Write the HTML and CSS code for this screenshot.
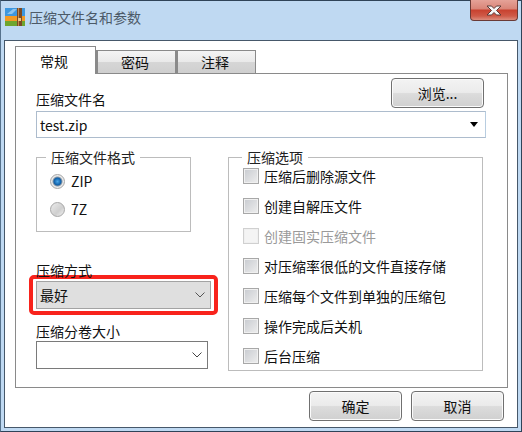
FILE: index.html

```html
<!DOCTYPE html>
<html lang="zh-CN">
<head>
  <meta charset="UTF-8" />
  <title>压缩文件名和参数</title>
  <link rel="stylesheet" href="styles.css">
</head>
<body>
  <div class="window">
    <div class="titlebar">
      <svg class="app-icon" width="20" height="18" viewBox="0 0 20 18">
        <rect x="0" y="0" width="20" height="8" fill="#3d97de"/>
        <path d="M2 6 L8 1 L12 1 L7 6 Z" fill="#8cc4ee"/>
        <rect x="0" y="8" width="20" height="5" fill="#f39a24"/>
        <rect x="0" y="13" width="20" height="5" fill="#6ea52e"/>
        <rect x="12" y="0" width="5" height="18" fill="#7c4a22"/>
        <rect x="13" y="0" width="1" height="18" fill="#c08a4c"/>
        <rect x="13" y="10" width="3" height="3" fill="#e8c98a"/>
      </svg>
      <span class="title">压缩文件名和参数</span>
      <div class="close">
        <svg width="18" height="11" viewBox="0 0 18 11">
          <path d="M2 1 H6.5 L9 3.5 L11.5 1 H16 L11.5 5.5 L16 10 H11.5 L9 7.5 L6.5 10 H2 L6.5 5.5 Z" fill="#f6f6f6" stroke="#5a3a38" stroke-width="1"/>
        </svg>
      </div>
    </div>

    <div class="client">
      <div class="tabs">
        <div class="tab active">常规</div>
        <div class="tab">密码</div>
        <div class="tab">注释</div>
      </div>

      <div class="panel">
        <div class="name-row">
          <label class="name-label">压缩文件名</label>
          <button class="btn browse">浏览...</button>
        </div>
        <div class="name-input">
          <span>test.zip</span>
          <span class="solid-arrow"></span>
        </div>

        <div class="columns">
          <div class="left-col">
            <fieldset class="group format-group">
              <legend>压缩文件格式</legend>
              <div class="radio-row"><span class="radio checked"></span>ZIP</div>
              <div class="radio-row"><span class="radio"></span>7Z</div>
            </fieldset>

            <div class="field-label method-label">压缩方式</div>
            <div class="highlight">
              <div class="select grey">
                <span>最好</span>
                <svg class="chevron" width="10" height="6" viewBox="0 0 10 6"><path d="M0.5 0.5 L5 5 L9.5 0.5" fill="none" stroke="#555" stroke-width="1"/></svg>
              </div>
            </div>

            <div class="field-label split-label">压缩分卷大小</div>
            <div class="select split">
              <svg class="chevron" width="10" height="6" viewBox="0 0 10 6"><path d="M0.5 0.5 L5 5 L9.5 0.5" fill="none" stroke="#444" stroke-width="1"/></svg>
            </div>
          </div>

          <fieldset class="group options-group">
            <legend>压缩选项</legend>
            <div class="check-row"><span class="check"></span>压缩后删除源文件</div>
            <div class="check-row"><span class="check"></span>创建自解压文件</div>
            <div class="check-row disabled"><span class="check"></span>创建固实压缩文件</div>
            <div class="check-row"><span class="check"></span>对压缩率很低的文件直接存储</div>
            <div class="check-row"><span class="check"></span>压缩每个文件到单独的压缩包</div>
            <div class="check-row"><span class="check"></span>操作完成后关机</div>
            <div class="check-row"><span class="check"></span>后台压缩</div>
          </fieldset>
        </div>
      </div>

      <div class="footer">
        <button class="btn">确定</button>
        <button class="btn">取消</button>
      </div>
    </div>
  </div>
</body>
</html>
```

FILE: styles.css

```css
* {
  box-sizing: border-box;
}
body {
  margin: 0;
  font-family: "Noto Sans CJK SC", "Noto Sans", sans-serif;
  font-size: 14px;
  color: #111;
  overflow: hidden;
}
.window {
  width: 522px;
  height: 432px;
  display: flex;
  flex-direction: column;
  padding: 0 3px 3px 3px;
  background: #bfd9f2;
  border: 1px solid #2f4358;
  border-left-color: #56728c;
  position: relative;
}
.titlebar {
  height: 39px;
  display: flex;
  align-items: flex-start;
  padding: 7px 0 0 1px;
}
.app-icon {
  margin-right: 4px;
}
.title {
  color: #4c5a68;
  line-height: 20px;
  margin-top: -1px;
}
.close {
  position: absolute;
  top: -1px;
  right: 3px;
  width: 48px;
  height: 21px;
  display: flex;
  align-items: center;
  justify-content: center;
  border: 1px solid #6a3a36;
  border-top: none;
  border-radius: 0 0 4px 4px;
  background: linear-gradient(#e5a298 0, #d98477 45%, #c8412f 50%, #cf5a48 80%, #dc8c7e 100%);
}
.client {
  flex: 1;
  background: #fff;
  border: 1px solid #46586a;
  padding: 5px 9px 0 10px;
}
.tabs {
  display: flex;
  align-items: flex-end;
  height: 27px;
}
.tab {
  width: 80px;
  height: 23px;
  line-height: 23px;
  text-align: center;
  padding-right: 3px;
  border: 1px solid #8a8a8a;
  border-bottom: none;
  border-left-width: 2px;
  background: linear-gradient(#f4f4f4 0, #e9e9e9 50%, #d6d6d6 52%, #cfcfcf 100%);
}
.tab.active {
  height: 28px;
  line-height: 28px;
  width: 81px;
  border-left-width: 1px;
  background: #fff;
  margin-bottom: -1px;
  position: relative;
  z-index: 1;
}
.panel {
  height: 315px;
  border: 1px solid #8a8a8a;
  padding: 5px 21px 0 20px;
}
.name-row {
  display: flex;
  justify-content: space-between;
  align-items: flex-end;
  height: 29px;
}
.name-label {
  line-height: 18px;
}
.btn {
  width: 93px;
  height: 30px;
  padding: 0 0 1px;
  font: inherit;
  color: #111;
  border: 1px solid #707070;
  border-radius: 4px;
  background: linear-gradient(#f3f3f3 0, #ebebeb 48%, #dcdcdc 52%, #d0d0d0 100%);
  box-shadow: inset 0 0 0 1px #fbfbfb;
}
.browse {
  margin-right: 2px;
}
.name-input {
  height: 27px;
  margin-top: 3px;
  display: flex;
  align-items: center;
  justify-content: space-between;
  padding: 0 7px 0 3px;
  border: 1px solid #adbccd;
  border-right-color: #b8cde0;
}
.solid-arrow {
  width: 0;
  height: 0;
  border-left: 4.5px solid transparent;
  border-right: 4.5px solid transparent;
  border-top: 5px solid #000;
}
.columns {
  display: flex;
  margin-top: 11px;
}
.left-col {
  width: 192px;
}
.group {
  margin: 0;
  padding: 0;
  border: 1px solid #bcbcbc;
}
.group legend {
  padding: 0 5px;
  line-height: 16px;
  color: #222;
}
.format-group {
  width: 155px;
  height: 83px;
  padding-top: 2px;
}
.format-group legend {
  margin-left: 9px;
}
.radio-row {
  display: flex;
  align-items: center;
  height: 28px;
  margin-left: 13px;
}
.radio {
  width: 15px;
  height: 15px;
  margin-right: 6px;
  border-radius: 50%;
  border: 1px solid #a6a6a6;
  background: linear-gradient(135deg, #ececec, #cfcfcf 60%, #f2f2f2);
}
.radio.checked {
  background: radial-gradient(circle, #4aa6e8 0, #0f5fa8 3.5px, #8a98a6 4.5px, #ececec 5.5px, #dcdcdc 100%);
}
.field-label {
  line-height: 16px;
}
.method-label {
  margin-top: 30px;
  margin-bottom: -3px;
  position: relative;
}
.highlight {
  width: 189px;
  height: 40px;
  margin-left: -7px;
  padding: 2px 3px;
  border: 4px solid #f8231c;
  border-radius: 5px;
}
.select {
  display: flex;
  align-items: center;
  justify-content: space-between;
  padding: 0 5px 0 3px;
  border: 1px solid #7a7a7a;
}
.select.grey {
  height: 28px;
  background: #dfdfdf;
  border-color: #a3a3a3;
}
.select.split {
  width: 172px;
  height: 28px;
  justify-content: flex-end;
}
.split-label {
  margin-top: 8px;
  margin-bottom: 2px;
}
.options-group {
  width: 255px;
  height: 222px;
}
.options-group legend {
  margin-left: 13px;
  margin-bottom: -4px;
}
.check-row {
  display: flex;
  align-items: center;
  height: 30px;
  margin-left: 14px;
}
.check {
  width: 16px;
  height: 16px;
  margin-right: 5px;
  border: 1px solid #a8a8a8;
  background: linear-gradient(135deg, #c8cbd0, #eeeeee);
  box-shadow: inset 0 0 0 1px #f0f0f0;
}
.check-row.disabled {
  color: #9a9a9a;
}
.check-row.disabled .check {
  border-color: #d0d0d0;
  background: #f4f4f4;
}
.footer {
  display: flex;
  justify-content: flex-end;
  gap: 9px;
  margin-top: 3px;
  padding-right: 4px;
}
```
